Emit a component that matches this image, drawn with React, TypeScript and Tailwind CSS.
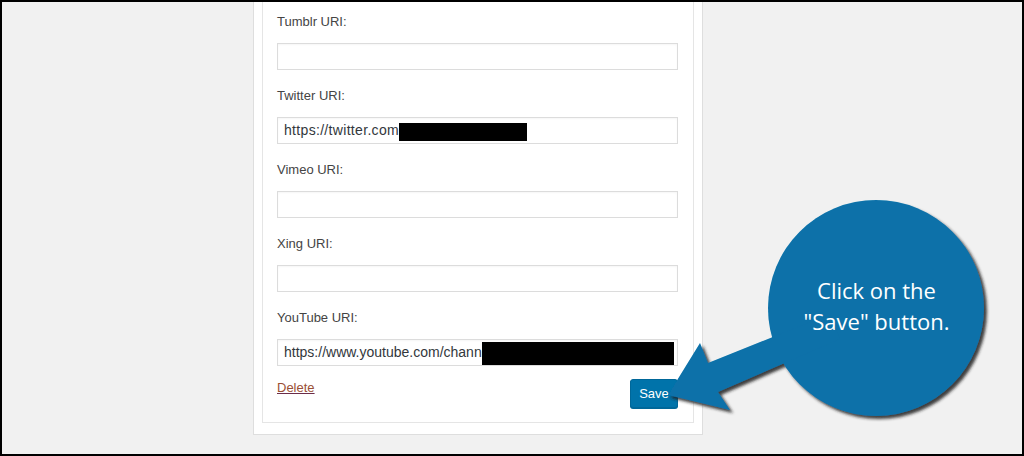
import React from 'react';

const fields = [
  { label: 'Tumblr URI:', value: '', redact: 0, wide: false, tall: false },
  { label: 'Twitter URI:', value: 'https://twitter.com', redact: 128, wide: true, tall: false },
  { label: 'Vimeo URI:', value: '', redact: 0, wide: false, tall: false },
  { label: 'Xing URI:', value: '', redact: 0, wide: false, tall: false },
  { label: 'YouTube URI:', value: 'https://www.youtube.com/chann', redact: 192, wide: false, tall: true },
];

function Field({
  label,
  value,
  redact,
  wide,
  tall,
}: {
  label: string;
  value: string;
  redact: number;
  wide: boolean;
  tall: boolean;
}) {
  return (
    <div className="flex flex-col">
      <label className="text-[13px] leading-[18px] text-[#444]">{label}</label>
      <div className="mt-[12px] h-[27px] border border-[#dcdcdc] bg-white shadow-[inset_0_1px_2px_rgba(0,0,0,0.04)] flex items-center pl-[6px] overflow-hidden">
        <span className={wide ? 'text-[14px] tracking-[0.32px] text-[#32373c] whitespace-nowrap' : 'text-[14px] text-[#32373c] whitespace-nowrap'}>
          {value}
        </span>
        {redact > 0 && (
          <span
            className={tall ? 'h-[23px] self-end bg-black shrink-0' : 'h-[18px] mt-[2px] bg-black shrink-0'}
            style={{ width: redact }}
          />
        )}
      </div>
    </div>
  );
}

function Callout() {
  return (
    <>
      <svg
        className="absolute left-0 top-0 pointer-events-none"
        width={1024}
        height={456}
        viewBox="0 0 1024 456"
      >
        <defs>
          <filter id="shadow" x="-20%" y="-20%" width="140%" height="140%">
            <feDropShadow dx="3" dy="3" stdDeviation="1.5" floodColor="#1a1a1a" floodOpacity="0.85" />
          </filter>
        </defs>
        <g filter="url(#shadow)" fill="#0871a9">
          <circle cx={876} cy={308} r={108} />
          <polygon points="830,314 708,363 700,343 668,395 730,410 718,392 840,339" />
        </g>
      </svg>
      <div className="absolute left-[768px] top-[275px] w-[217px] text-center text-white text-[22px] leading-[31px] font-['Open_Sans',sans-serif]">
        Click on the
        <br />
        "Save" button.
      </div>
    </>
  );
}

export default function App() {
  return (
    <div className="relative w-[1024px] h-[456px] bg-black p-[2px] font-['Liberation_Sans',Arial,sans-serif]">
      <div className="w-full h-full bg-[#f1f1f1] overflow-hidden">
        <div className="ml-[251px] w-[450px] bg-white border-x border-b border-[#dedede] px-[8px] pb-[11px]">
          <div className="border-x border-b border-[#e5e5e5] pl-[14px] pr-[15px] pt-[11px] pb-[14px]">
            <div className="flex flex-col gap-[17px]">
              {fields.map((f) => (
                <Field key={f.label} {...f} />
              ))}
            </div>
            <div className="mt-[13px] flex items-start justify-between">
              <a href="#" className="text-[13px] leading-[18px] text-[#9a4f35] underline decoration-[#6b2d4a]">
                Delete
              </a>
              <button
                type="button"
                className="h-[29px] w-[48px] rounded-[3px] bg-[#0073aa] border border-[#006799] shadow-[0_1px_0_#006799] text-white text-[13px]"
              >
                Save
              </button>
            </div>
          </div>
        </div>
      </div>
      <Callout />
    </div>
  );
}
